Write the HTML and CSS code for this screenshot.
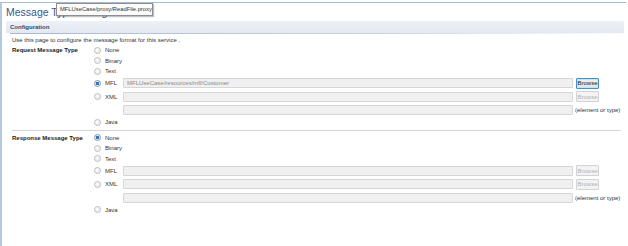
FILE: index.html
```html
<!DOCTYPE html>
<html lang="en">
<head>
  <meta charset="UTF-8" />
  <title>Message Type Configuration</title>
  <link rel="stylesheet" href="styles.css">
</head>
<body>
  <div class="editor">
    <h1 class="title">Message Type Configuration</h1>
    <div class="tooltip">MFLUseCase/proxy/ReadFile.proxy</div>

    <div class="section">
      <div class="section-head">Configuration</div>
      <div class="section-body">
        <p class="desc">Use this page to configure the message format for this service .</p>

        <div class="group">
          <div class="group-label">Request Message Type</div>
          <div class="options">
            <div class="opt"><span class="radio"></span>None</div>
            <div class="opt"><span class="radio"></span>Binary</div>
            <div class="opt"><span class="radio"></span>Text</div>
            <div class="opt field-row">
              <span class="opt-name"><span class="radio checked"></span>MFL</span>
              <input class="field" type="text" value="MFLUseCase/resources/mfl/Customer" readonly />
              <button class="browse active">Browse</button>
            </div>
            <div class="opt field-row">
              <span class="opt-name"><span class="radio"></span>XML</span>
              <input class="field" type="text" readonly />
              <button class="browse" disabled>Browse</button>
            </div>
            <div class="opt field-row">
              <span class="opt-name"></span>
              <input class="field" type="text" readonly />
              <span class="hint">(element or type)</span>
            </div>
            <div class="opt"><span class="radio"></span>Java</div>
          </div>
        </div>

        <hr class="sep" />

        <div class="group">
          <div class="group-label">Response Message Type</div>
          <div class="options">
            <div class="opt"><span class="radio checked"></span>None</div>
            <div class="opt"><span class="radio"></span>Binary</div>
            <div class="opt"><span class="radio"></span>Text</div>
            <div class="opt field-row">
              <span class="opt-name"><span class="radio"></span>MFL</span>
              <input class="field" type="text" readonly />
              <button class="browse" disabled>Browse</button>
            </div>
            <div class="opt field-row">
              <span class="opt-name"><span class="radio"></span>XML</span>
              <input class="field" type="text" readonly />
              <button class="browse" disabled>Browse</button>
            </div>
            <div class="opt field-row">
              <span class="opt-name"></span>
              <input class="field" type="text" readonly />
              <span class="hint">(element or type)</span>
            </div>
            <div class="opt"><span class="radio"></span>Java</div>
          </div>
        </div>
      </div>
    </div>
  </div>
</body>
</html>
```

FILE: styles.css
```css
body {
  margin: 0;
  padding: 0;
  background: #fff;
  font-family: "Liberation Sans", Arial, sans-serif;
  color: #222;
}
.editor {
  position: relative;
  margin-top: 2px;
  width: 626px;
  height: 244px;
  border-top: 1px solid #a3bbd8;
  border-left: 2px solid #b4c8e0;
  box-sizing: border-box;
}
.title {
  margin: 0;
  padding: 3px 0 0 4px;
  height: 15px;
  font-size: 10.5px;
  font-weight: normal;
  color: #3a5a86;
  line-height: 13px;
}
.tooltip {
  position: absolute;
  left: 54px;
  top: 0;
  width: 92px;
  height: 11px;
  padding-left: 3px;
  background: #fbfbfb;
  border: 1px solid #8e8e8e;
  box-shadow: 1px 1px 1px rgba(0,0,0,0.25);
  font-size: 5.8px;
  line-height: 11px;
  color: #333;
}
.section {
  margin-left: 4px;
  width: 618px;
}
.section-head {
  height: 12px;
  padding-left: 4px;
  background: linear-gradient(#edf1f7, #e2e8f1);
  border-radius: 0 2px 0 0;
  font-size: 6px;
  font-weight: bold;
  line-height: 12px;
  color: #2c4a74;
}
.section-head::after {
  content: "";
  display: block;
  height: 1px;
  background: linear-gradient(to right, #a9b9cf, #c9d4e3 60%, #fff);
}
.section-body {
  padding: 2px 3px 0 6px;
}
.desc {
  margin: 0;
  font-size: 6px;
  line-height: 10px;
  color: #333;
}
.group {
  display: grid;
  grid-template-columns: 82px 1fr;
}
.group-label {
  font-size: 6px;
  font-weight: bold;
  line-height: 10.5px;
  color: #222;
}
.options {
  display: flex;
  flex-direction: column;
}
.opt {
  display: flex;
  align-items: center;
  height: 10.5px;
  font-size: 6px;
  color: #333;
}
.field-row {
  display: grid;
  grid-template-columns: 29px 450px auto;
  align-items: center;
  height: 13.5px;
}
.opt-name {
  display: flex;
  align-items: center;
}
.radio {
  display: inline-block;
  width: 5px;
  height: 5px;
  margin-right: 4px;
  border: 1px solid #bdbdbd;
  border-radius: 50%;
  background: radial-gradient(circle at 40% 40%, #fdfdfd, #e4e4e4);
}
.radio.checked {
  border-color: #8797aa;
  background: radial-gradient(circle, #2a6fb8 0, #2f78c4 1.4px, #e6eef7 2px);
}
.field {
  box-sizing: border-box;
  width: 450px;
  height: 10px;
  margin: 0;
  padding: 0 3px;
  border: 1px solid #d6d6d6;
  border-radius: 1px;
  background: #f0f0f0;
  font-family: inherit;
  font-size: 6px;
  color: #8a8a8a;
  outline: none;
}
.browse {
  box-sizing: border-box;
  width: 23px;
  height: 11px;
  margin-left: 3px;
  padding: 0;
  border: 1px solid #d2d2d2;
  border-radius: 1px;
  background: #f3f3f3;
  font-family: inherit;
  font-size: 6px;
  color: #b2b2b2;
}
.browse.active {
  border-color: #3d94cc;
  background: linear-gradient(#f0f0f0, #e2e2e2);
  box-shadow: inset 0 0 0 1px #c7e2f3;
  color: #222;
}
.hint {
  margin-left: 2px;
  font-size: 6px;
  color: #333;
}
.sep {
  margin: 2px 0 2px 0;
  height: 0;
  border: none;
  border-top: 1px solid #d4d4d4;
}
```
